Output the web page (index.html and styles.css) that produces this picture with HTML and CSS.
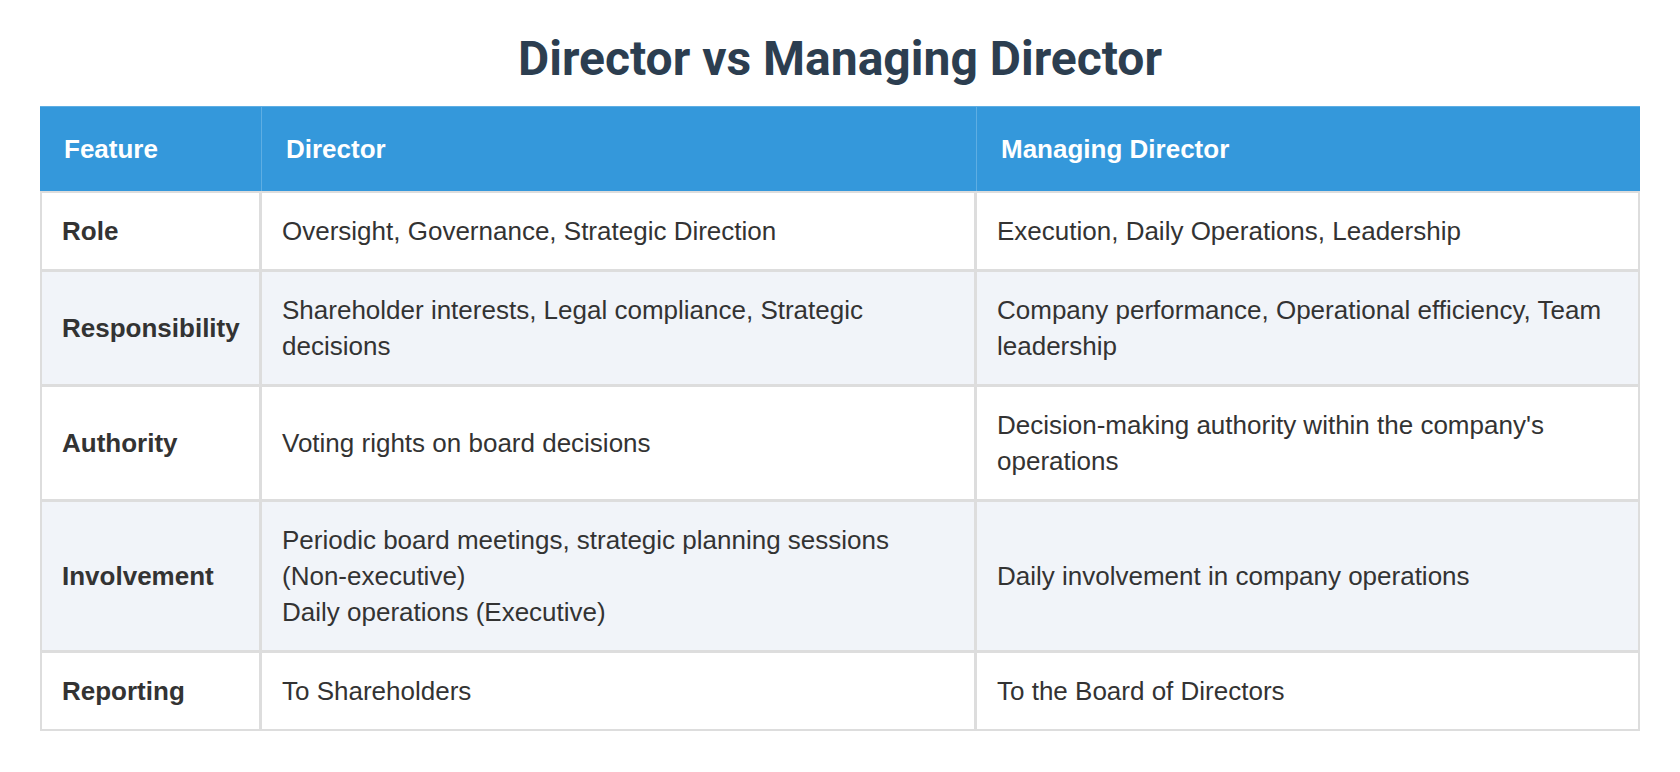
FILE: index.html
```html
<!DOCTYPE html>
<html lang="en">
<head>
<meta charset="utf-8">
<title>Director vs Managing Director</title>
<link rel="stylesheet" href="styles.css">
</head>
<body>
<main class="page">
  <h1 class="title">Director vs Managing Director</h1>
  <table class="compare">
    <colgroup>
      <col class="col-feature">
      <col class="col-director">
      <col class="col-md">
    </colgroup>
    <thead>
      <tr>
        <th>Feature</th>
        <th>Director</th>
        <th>Managing Director</th>
      </tr>
    </thead>
    <tbody>
      <tr>
        <td class="feature">Role</td>
        <td>Oversight, Governance, Strategic Direction</td>
        <td>Execution, Daily Operations, Leadership</td>
      </tr>
      <tr>
        <td class="feature">Responsibility</td>
        <td>Shareholder interests, Legal compliance, Strategic decisions</td>
        <td>Company performance, Operational efficiency, Team leadership</td>
      </tr>
      <tr>
        <td class="feature">Authority</td>
        <td>Voting rights on board decisions</td>
        <td>Decision-making authority within the company's operations</td>
      </tr>
      <tr>
        <td class="feature">Involvement</td>
        <td>Periodic board meetings, strategic planning sessions <span class="nowrap">(Non-executive)</span><br>Daily operations (Executive)</td>
        <td>Daily involvement in company operations</td>
      </tr>
      <tr>
        <td class="feature">Reporting</td>
        <td>To Shareholders</td>
        <td>To the Board of Directors</td>
      </tr>
    </tbody>
  </table>
</main>
</body>
</html>
```

FILE: styles.css
```css
html, body {
  margin: 0;
  padding: 0;
  background: #ffffff;
}

body {
  font-family: "Liberation Sans", Arial, sans-serif;
  color: #333333;
}

.page {
  width: 1600px;
  margin: 0 auto;
  padding-top: 33px;
}

.title {
  margin: 0 0 21px;
  font-family: Roboto, "Liberation Sans", sans-serif;
  font-weight: 700;
  font-size: 48px;
  line-height: 52px;
  text-align: center;
  color: #2c3e50;
}

.compare {
  width: 1600px;
  table-layout: fixed;
  border-collapse: separate;
  border-spacing: 0;
  font-size: 26px;
  line-height: 36px;
}

.col-feature { width: 222px; }
.col-director { width: 715px; }
.col-md { width: 663px; }

.compare th {
  background: #3498db;
  color: #ffffff;
  font-weight: 700;
  text-align: left;
  padding: 24px 24px;
  border-top: 1px solid #5eaee3;
  border-right: 1px solid #5eaee3;
}

.compare th:last-child {
  border-right: none;
}

.compare td {
  padding: 20px 20px;
  vertical-align: middle;
  border-right: 3px solid #dddddd;
  border-bottom: 3px solid #dddddd;
  background: #ffffff;
}

.compare td:first-child {
  border-left: 2px solid #dddddd;
}

.compare td:last-child {
  border-right-width: 2px;
}

.compare tbody tr:first-child td {
  border-top: 2px solid #dddddd;
}

.compare tbody tr:last-child td {
  border-bottom-width: 2px;
}

.compare tbody tr:nth-child(even) td {
  background: #f1f4f9;
}

.compare td.feature {
  font-weight: 700;
  color: #333333;
}

.nowrap {
  white-space: nowrap;
}
```
